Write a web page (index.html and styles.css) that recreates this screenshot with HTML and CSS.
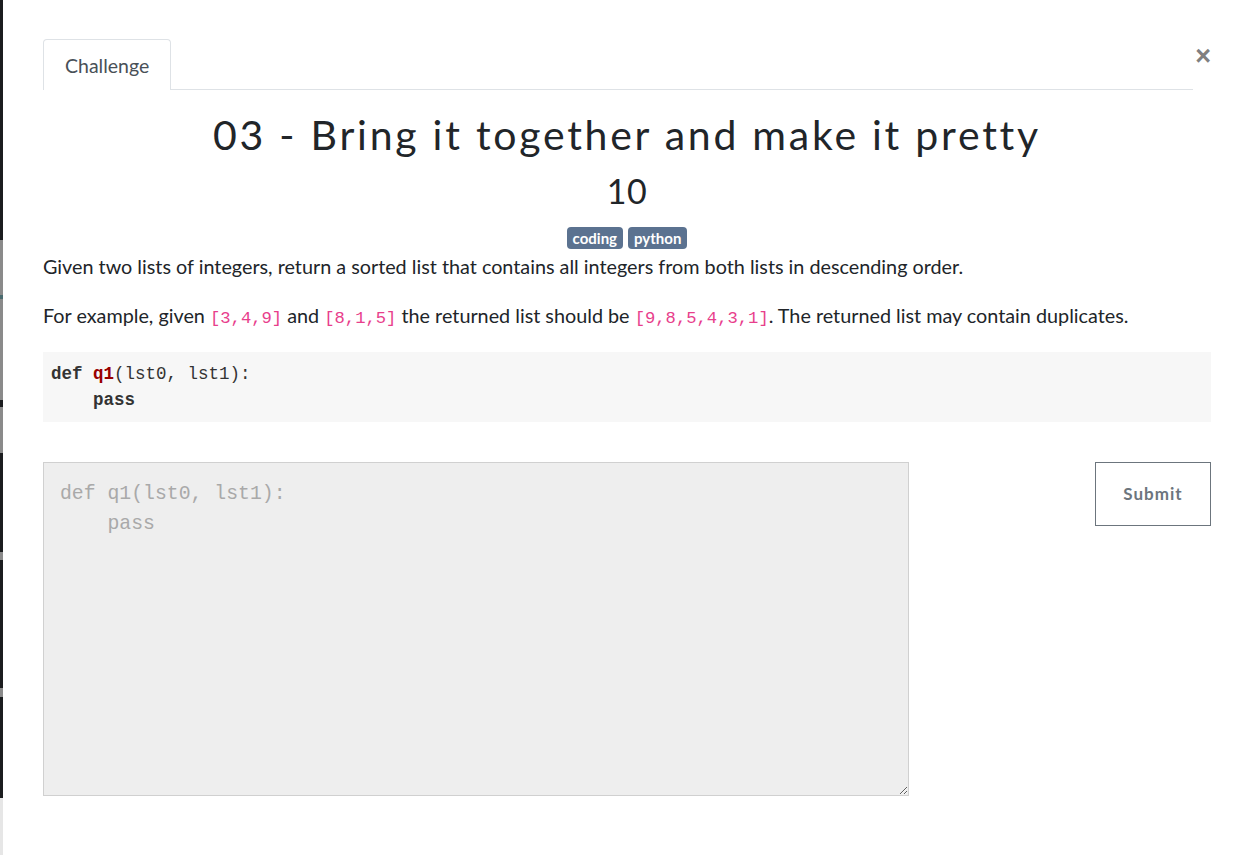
FILE: index.html
```html
<!DOCTYPE html>
<html lang="en">
<head>
<meta charset="utf-8">
<title>Challenge</title>
<link rel="stylesheet" href="styles.css">
</head>
<body>
<div class="page">
  <div class="backdrop-edge"></div>
  <div class="modal">
    <div class="modal-head">
      <ul class="nav-tabs">
        <li class="tab active">Challenge</li>
      </ul>
      <button class="close" type="button">×</button>
    </div>
    <div class="challenge">
      <h2 class="title">03 - Bring it together and make it pretty</h2>
      <h3 class="value">10</h3>
      <div class="tags">
        <span class="badge">coding</span>
        <span class="badge">python</span>
      </div>
      <div class="desc">
        <p>Given two lists of integers, return a sorted list that contains all integers from both lists in descending order.</p>
        <p>For example, given <code>[3,4,9]</code> and <code>[8,1,5]</code> the returned list should be <code>[9,8,5,4,3,1]</code>. The returned list may contain duplicates.</p>
        <pre class="codeblock"><span class="kw">def</span> <span class="fn">q1</span>(lst0, lst1):
    <span class="kw">pass</span></pre>
      </div>
      <div class="answer-row">
        <textarea class="answer" placeholder="def q1(lst0, lst1):
    pass"></textarea>
        <div class="submit-col">
          <button class="submit" type="button">Submit</button>
        </div>
      </div>
    </div>
  </div>
</div>
</body>
</html>
```
FILE: styles.css
```css
html, body {
  margin: 0;
  padding: 0;
  background: #fff;
}
body {
  font-family: Lato, "Liberation Sans", sans-serif;
  color: #212529;
}
.page {
  display: flex;
  min-height: 855px;
}
.backdrop-edge {
  width: 3px;
  flex: none;
  background: linear-gradient(to bottom,
    #1b1d1f 0, #1b1d1f 240px,
    #8a8a8a 240px, #8a8a8a 295px,
    #4a6a6e 295px, #4a6a6e 299px,
    #8a8a8a 299px, #8a8a8a 400px,
    #1b1d1f 400px, #1b1d1f 407px,
    #8a8a8a 407px, #8a8a8a 453px,
    #1b1d1f 453px, #1b1d1f 552px,
    #8a8a8a 552px, #8a8a8a 560px,
    #1b1d1f 560px, #1b1d1f 688px,
    #8a8a8a 688px, #8a8a8a 697px,
    #1b1d1f 697px, #1b1d1f 798px,
    #e6e6e6 798px, #e6e6e6 855px);
}
.modal {
  flex: 1;
  padding: 39px 40px 0 40px;
}
.modal-head {
  display: flex;
  align-items: flex-start;
}
.nav-tabs {
  flex: 1;
  list-style: none;
  margin: 0;
  padding: 0;
  display: flex;
  border-bottom: 1px solid #dee2e6;
}
.tab {
  font-size: 19.5px;
  color: #495057;
  padding: 0 21px;
  height: 50px;
  line-height: 52px;
  border: 1px solid #dee2e6;
  border-bottom: none;
  border-radius: 4px 4px 0 0;
  margin-bottom: -1px;
  background: #fff;
}
.close {
  width: 18px;
  border: none;
  background: none;
  padding: 0;
  margin: 3px 0 0 0;
  font-family: "Liberation Sans", sans-serif;
  font-weight: 700;
  font-size: 27px;
  line-height: 28px;
  color: #808080;
  text-align: right;
}
.challenge {
  padding-top: 4px;
}
.title {
  margin: 0;
  text-align: center;
  font-family: Lato, sans-serif;
  font-weight: 400;
  font-size: 41px;
  letter-spacing: 2.75px;
  line-height: 82px;
  color: #212529;
}
.value {
  margin: 0;
  text-align: center;
  font-weight: 400;
  font-size: 34px;
  line-height: 30px;
  color: #212529;
  letter-spacing: 0.5px;
}
.tags {
  display: flex;
  justify-content: center;
  gap: 5px;
  margin-top: 21px;
}
.badge {
  display: inline-block;
  background: #5b7290;
  color: #fff;
  font-weight: 700;
  font-size: 15px;
  line-height: 22px;
  padding: 0 6px;
  border-radius: 4px;
}
.desc p {
  margin: 0 0 21px 0;
  font-size: 19.8px;
  line-height: 28px;
  color: #212529;
}
.desc p:first-child {
  margin-top: 3px;
}
code {
  font-family: "Liberation Mono", monospace;
  font-size: 17.2px;
  color: #e83e8c;
}
.codeblock {
  margin: -2px 0 0 0;
  background: #f7f7f7;
  padding: 9px 8px 9px 8px;
  font-family: "Liberation Mono", monospace;
  font-size: 17.5px;
  line-height: 26px;
  color: #333;
}
.codeblock .kw {
  font-weight: 700;
  color: #333;
}
.codeblock .fn {
  font-weight: 700;
  color: #990000;
}
.answer-row {
  display: flex;
  justify-content: space-between;
  align-items: flex-start;
  margin-top: 40px;
}
.answer {
  width: 866px;
  height: 334px;
  box-sizing: border-box;
  background: #eeeeee;
  border: 1px solid #d0d0d0;
  border-radius: 0;
  padding: 16px 16px;
  font-family: "Liberation Mono", monospace;
  font-size: 19.8px;
  line-height: 30px;
  color: #444;
  resize: vertical;
  margin: 0;
}
.answer::placeholder {
  color: #a9a9a9;
}
.submit {
  width: 116px;
  height: 64px;
  background: #fff;
  border: 1px solid #6c757d;
  border-radius: 0;
  font-family: Lato, sans-serif;
  font-weight: 700;
  font-size: 17px;
  letter-spacing: 1px;
  color: #6c757d;
  padding: 0 0 2px 0;
}
```
